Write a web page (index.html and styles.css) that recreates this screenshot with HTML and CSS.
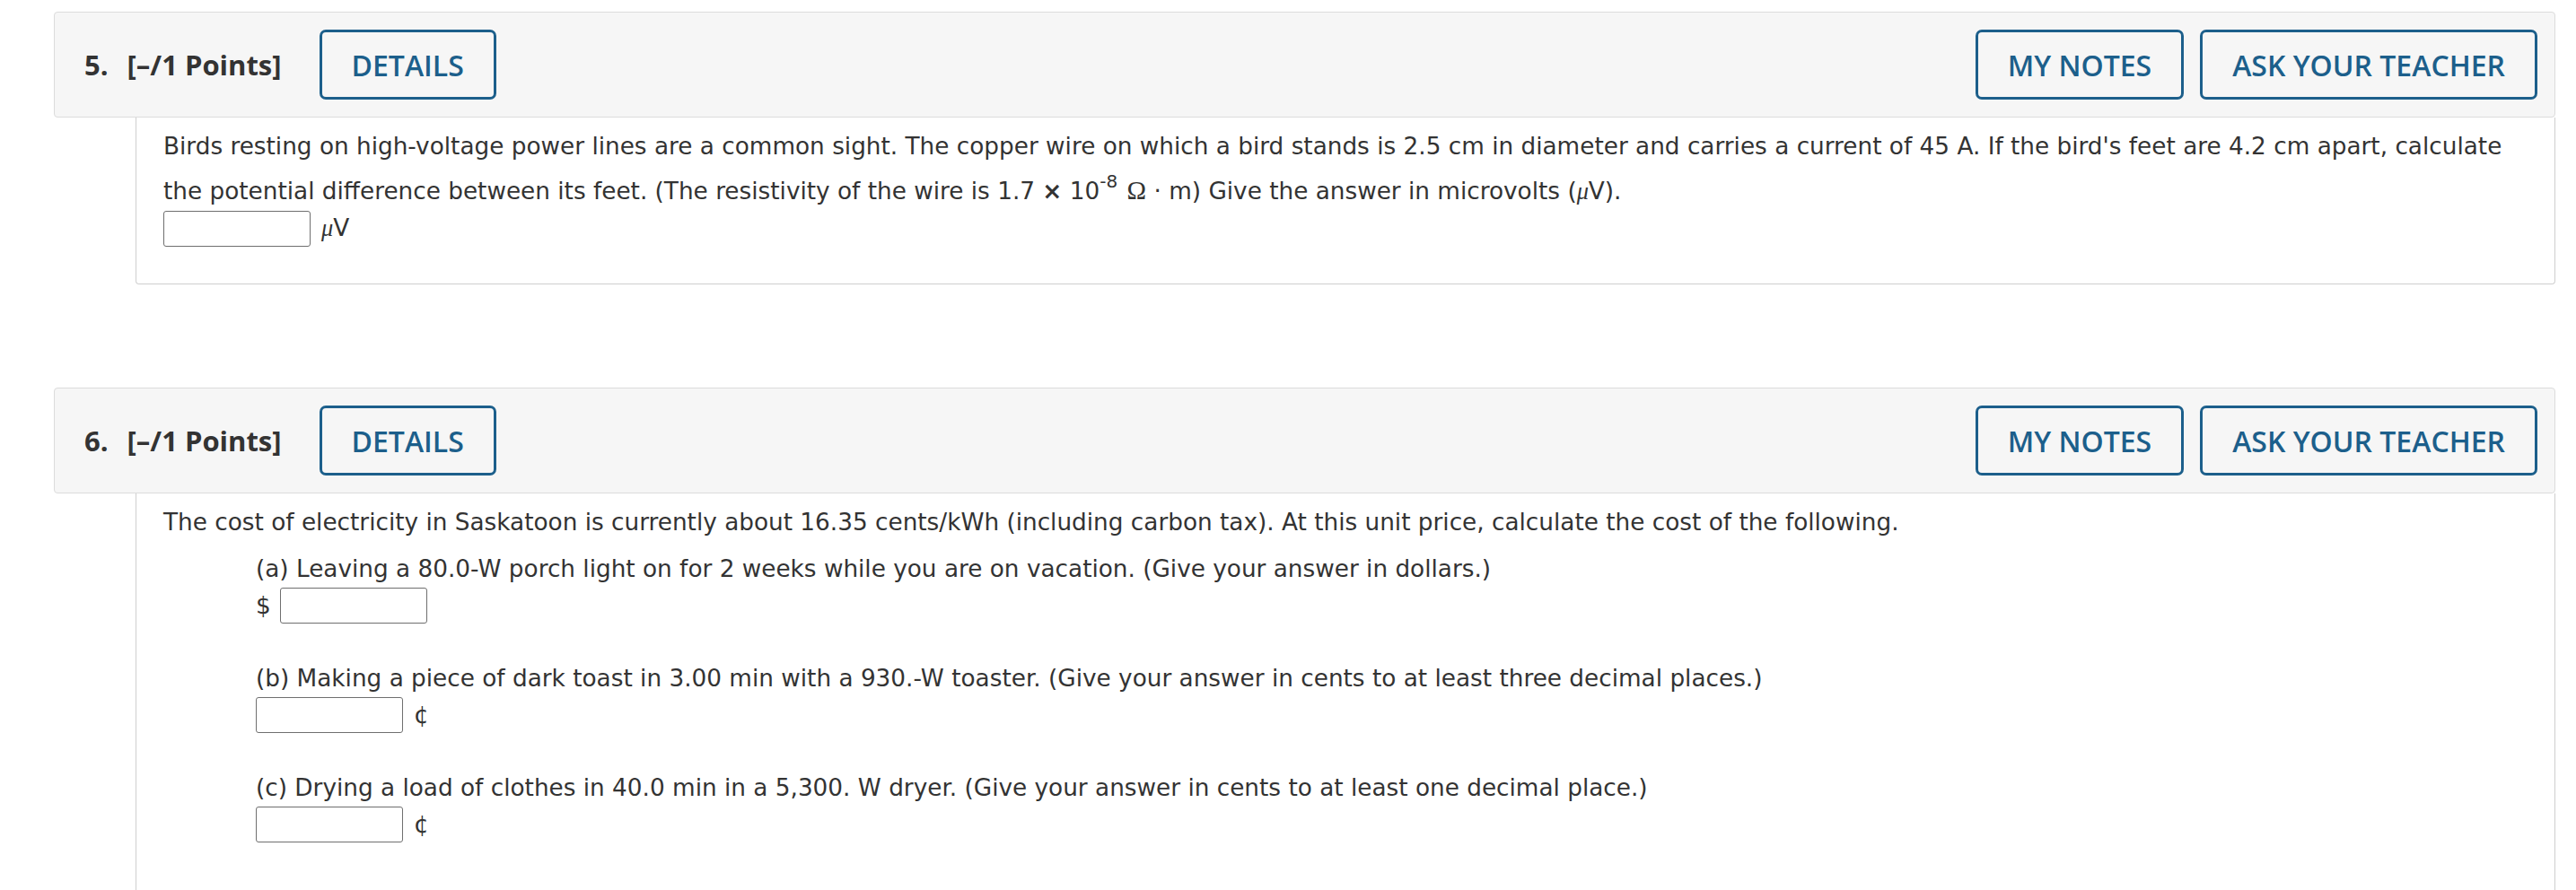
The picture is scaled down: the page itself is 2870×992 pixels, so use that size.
FILE: index.html
```html
<!DOCTYPE html>
<html lang="en">
<head>
<meta charset="utf-8">
<title>Questions</title>
<link rel="stylesheet" href="styles.css">
</head>
<body>
<div class="page">
  <section class="question q5">
    <div class="qhead">
      <div class="qnum"><span class="num">5.</span><span class="pts">[–/1 Points]</span></div>
      <button class="btn details">DETAILS</button>
      <div class="actions">
        <button class="btn">MY NOTES</button>
        <button class="btn">ASK YOUR TEACHER</button>
      </div>
    </div>
    <div class="qbody">
      <p class="text">Birds resting on high-voltage power lines are a common sight. The copper wire on which a bird stands is 2.5 cm in diameter and carries a current of 45 A. If the bird's feet are 4.2 cm apart, calculate the potential difference between its feet. (The resistivity of the wire is 1.7 <b class="times">×</b> 10<span class="sup">-8</span> <span class="omega">Ω</span> · m) Give the answer in microvolts (<span class="mu">μ</span>V).</p>
      <div class="answer">
        <input class="field" type="text">
        <span class="unit"><span class="mu">μ</span>V</span>
      </div>
    </div>
  </section>

  <section class="question q6">
    <div class="qhead">
      <div class="qnum"><span class="num">6.</span><span class="pts">[–/1 Points]</span></div>
      <button class="btn details">DETAILS</button>
      <div class="actions">
        <button class="btn">MY NOTES</button>
        <button class="btn">ASK YOUR TEACHER</button>
      </div>
    </div>
    <div class="qbody tall">
      <p class="text">The cost of electricity in Saskatoon is currently about 16.35 cents/kWh (including carbon tax). At this unit price, calculate the cost of the following.</p>
      <div class="parts">
        <div class="part">
          <p class="text">(a) Leaving a 80.0-W porch light on for 2 weeks while you are on vacation. (Give your answer in dollars.)</p>
          <div class="answer dollars">
            <span class="unit">$</span>
            <input class="field" type="text">
          </div>
        </div>
        <div class="part">
          <p class="text">(b) Making a piece of dark toast in 3.00 min with a 930.-W toaster. (Give your answer in cents to at least three decimal places.)</p>
          <div class="answer">
            <input class="field" type="text">
            <span class="unit">¢</span>
          </div>
        </div>
        <div class="part">
          <p class="text">(c) Drying a load of clothes in 40.0 min in a 5,300. W dryer. (Give your answer in cents to at least one decimal place.)</p>
          <div class="answer">
            <input class="field" type="text">
            <span class="unit">¢</span>
          </div>
        </div>
      </div>
    </div>
  </section>
</div>
</body>
</html>
```

FILE: styles.css
```css
html, body {
  margin: 0;
  padding: 0;
  background: #ffffff;
}

.page {
  padding: 13px 23px 0 60px;
  font-family: "DejaVu Sans", Verdana, sans-serif;
  color: #333333;
}

.question {
  margin-bottom: 115px;
}

.qhead {
  display: flex;
  align-items: center;
  box-sizing: border-box;
  height: 118px;
  padding: 0 19px 0 33px;
  background: #f6f6f6;
  border: 1px solid #dcdcdc;
  border-radius: 4px;
}

.qnum {
  display: flex;
  align-items: baseline;
  gap: 21px;
  font-family: "Open Sans", "Liberation Sans", sans-serif;
  font-weight: 700;
  font-size: 31px;
  color: #333333;
}

.btn {
  box-sizing: border-box;
  height: 78px;
  padding: 0 33px;
  background: transparent;
  border: 3px solid #1c5f8b;
  border-radius: 7px;
  font-family: "Open Sans", "Liberation Sans", sans-serif;
  font-weight: 600;
  font-size: 32px;
  color: #1c5f8b;
}

.details {
  margin-left: 42px;
}

.actions {
  display: flex;
  gap: 18px;
  margin-left: auto;
}

.qbody {
  margin-left: 91px;
  padding: 8px 50px 41px 30px;
  border: 1px solid #cfcfcf;
  border-top: none;
  border-radius: 0 0 4px 4px;
}

.qbody.tall {
  padding-bottom: 60px;
}

.text {
  margin: 0;
  font-size: 26.3px;
  line-height: 49px;
}

.times {
  font-weight: 700;
}

.sup {
  font-size: 20px;
  line-height: 1;
  vertical-align: 13px;
  margin-right: 2px;
}

.omega {
  font-family: "Liberation Serif", serif;
  font-size: 29px;
}

.mu {
  font-family: "Liberation Serif", serif;
  font-style: italic;
}

.answer {
  display: flex;
  align-items: center;
  gap: 12px;
  margin-top: -4px;
}

.answer.dollars {
  gap: 10px;
}

.field {
  box-sizing: border-box;
  width: 164px;
  height: 40px;
  margin: 0;
  border: 1px solid #6f6f6f;
  border-radius: 3px;
  background: #ffffff;
}

.unit {
  font-size: 26.3px;
  line-height: 40px;
}

.parts {
  margin: 3px 0 0 103px;
  display: flex;
  flex-direction: column;
  gap: 37px;
}
```
